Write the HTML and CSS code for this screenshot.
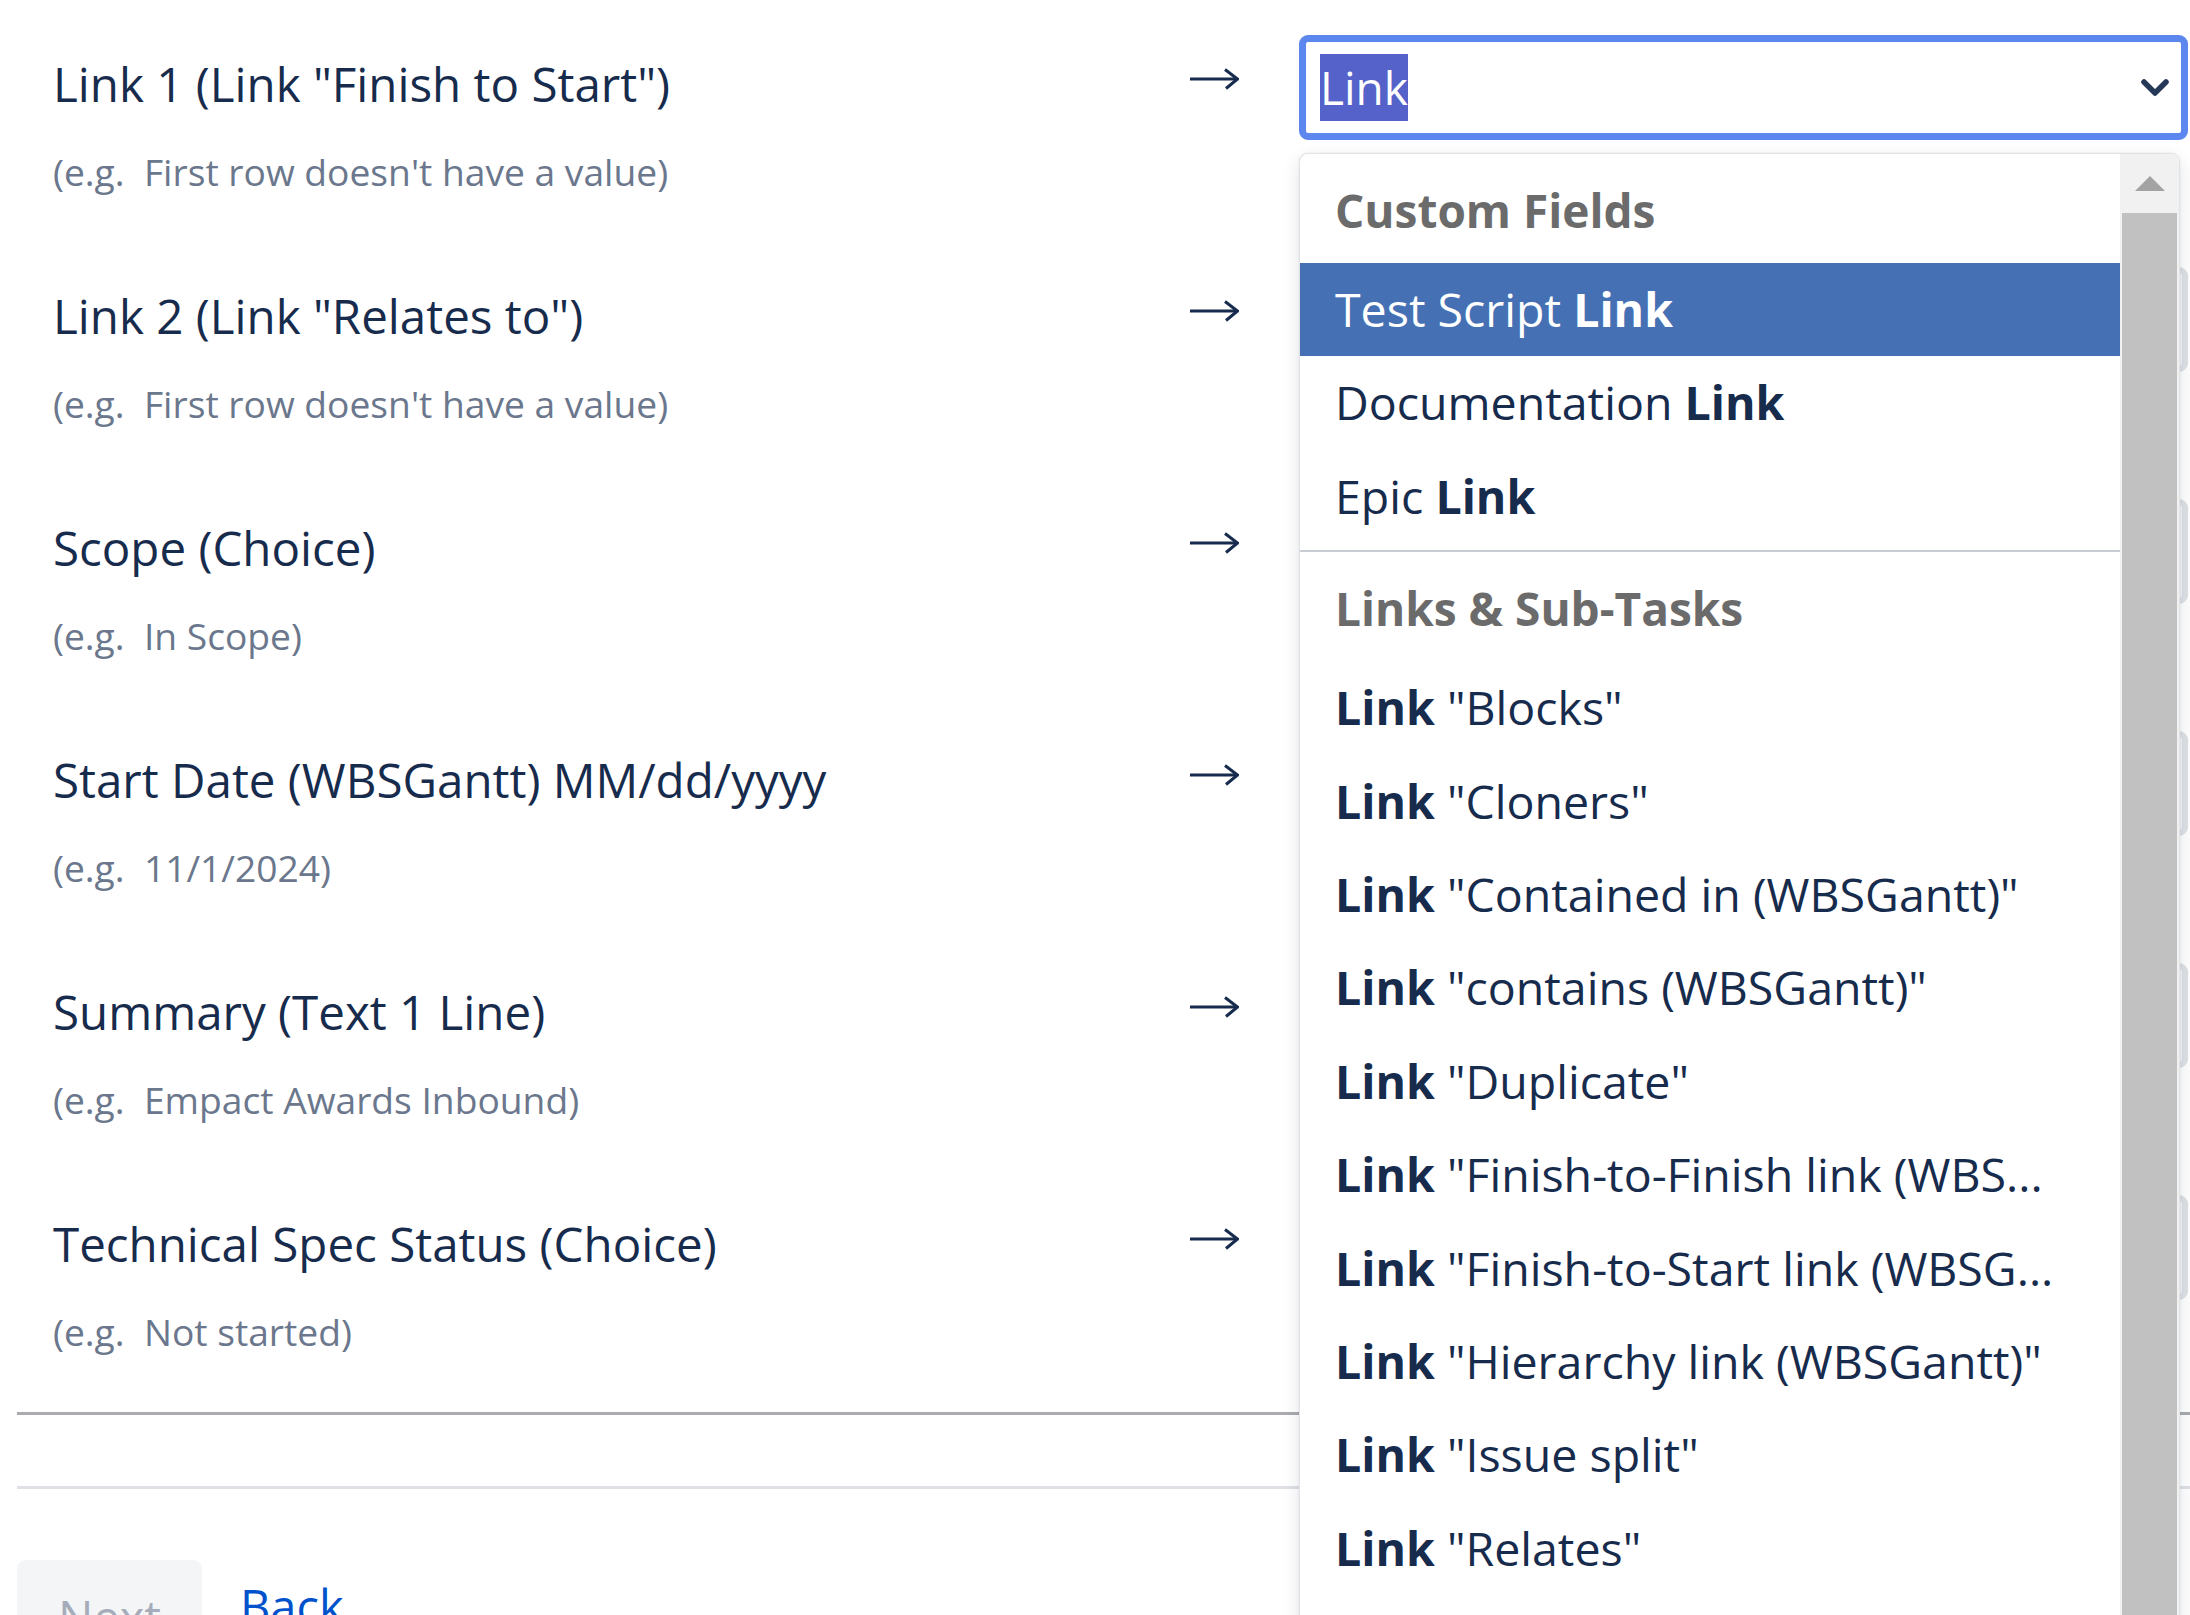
FILE: index.html
```html
<!DOCTYPE html>
<html lang="en">
<head>
<meta charset="utf-8">
<title>Field mapping</title>
<link rel="stylesheet" href="styles.css">
</head>
<body>
<div class="page">
  <div class="rows">
    <div class="row">
      <div class="field">
        <div class="label">Link 1 (Link "Finish to Start")</div>
        <div class="hint">(e.g.&nbsp; First row doesn't have a value)</div>
      </div>
      <div class="arrow"><svg width="50" height="24" viewBox="0 0 50 24"><path d="M1 12 H47" stroke="#172b4d" stroke-width="3" fill="none"/><path d="M36 2.5 L48.5 12 L37 21.5" stroke="#172b4d" stroke-width="3" fill="none"/></svg></div>
      <div class="select focused">
        <span class="value"><span class="sel-text">Link</span></span>
        <svg class="chev" width="28" height="20" viewBox="0 0 28 20"><path d="M3 4 L14 15 L25 4" stroke="#253858" stroke-width="5.5" fill="none" stroke-linecap="round" stroke-linejoin="round"/></svg>
      </div>
    </div>
    <div class="row">
      <div class="field">
        <div class="label">Link 2 (Link "Relates to")</div>
        <div class="hint">(e.g.&nbsp; First row doesn't have a value)</div>
      </div>
      <div class="arrow"><svg width="50" height="24" viewBox="0 0 50 24"><path d="M1 12 H47" stroke="#172b4d" stroke-width="3" fill="none"/><path d="M36 2.5 L48.5 12 L37 21.5" stroke="#172b4d" stroke-width="3" fill="none"/></svg></div>
      <div class="select"></div>
    </div>
    <div class="row">
      <div class="field">
        <div class="label">Scope (Choice)</div>
        <div class="hint">(e.g.&nbsp; In Scope)</div>
      </div>
      <div class="arrow"><svg width="50" height="24" viewBox="0 0 50 24"><path d="M1 12 H47" stroke="#172b4d" stroke-width="3" fill="none"/><path d="M36 2.5 L48.5 12 L37 21.5" stroke="#172b4d" stroke-width="3" fill="none"/></svg></div>
      <div class="select"></div>
    </div>
    <div class="row">
      <div class="field">
        <div class="label">Start Date (WBSGantt) MM/dd/yyyy</div>
        <div class="hint">(e.g.&nbsp; 11/1/2024)</div>
      </div>
      <div class="arrow"><svg width="50" height="24" viewBox="0 0 50 24"><path d="M1 12 H47" stroke="#172b4d" stroke-width="3" fill="none"/><path d="M36 2.5 L48.5 12 L37 21.5" stroke="#172b4d" stroke-width="3" fill="none"/></svg></div>
      <div class="select"></div>
    </div>
    <div class="row">
      <div class="field">
        <div class="label">Summary (Text 1 Line)</div>
        <div class="hint">(e.g.&nbsp; Empact Awards Inbound)</div>
      </div>
      <div class="arrow"><svg width="50" height="24" viewBox="0 0 50 24"><path d="M1 12 H47" stroke="#172b4d" stroke-width="3" fill="none"/><path d="M36 2.5 L48.5 12 L37 21.5" stroke="#172b4d" stroke-width="3" fill="none"/></svg></div>
      <div class="select"></div>
    </div>
    <div class="row">
      <div class="field">
        <div class="label">Technical Spec Status (Choice)</div>
        <div class="hint">(e.g.&nbsp; Not started)</div>
      </div>
      <div class="arrow"><svg width="50" height="24" viewBox="0 0 50 24"><path d="M1 12 H47" stroke="#172b4d" stroke-width="3" fill="none"/><path d="M36 2.5 L48.5 12 L37 21.5" stroke="#172b4d" stroke-width="3" fill="none"/></svg></div>
      <div class="select"></div>
    </div>
  </div>
  <div class="rule strong"></div>
  <div class="rule light"></div>
  <div class="actions">
    <button class="btn-next" disabled>Next</button>
    <a class="btn-back" href="#">Back</a>
  </div>

  <div class="menu">
    <div class="menu-list">
      <div class="group">
        <div class="group-heading">Custom Fields</div>
        <div class="option selected">Test Script <b>Link</b></div>
        <div class="option">Documentation <b>Link</b></div>
        <div class="option">Epic <b>Link</b></div>
      </div>
      <div class="group sep">
        <div class="group-heading">Links &amp; Sub-Tasks</div>
        <div class="option"><b>Link</b> "Blocks"</div>
        <div class="option"><b>Link</b> "Cloners"</div>
        <div class="option"><b>Link</b> "Contained in (WBSGantt)"</div>
        <div class="option"><b>Link</b> "contains (WBSGantt)"</div>
        <div class="option"><b>Link</b> "Duplicate"</div>
        <div class="option"><b>Link</b> "Finish-to-Finish link (WBS...</div>
        <div class="option"><b>Link</b> "Finish-to-Start link (WBSG...</div>
        <div class="option"><b>Link</b> "Hierarchy link (WBSGantt)"</div>
        <div class="option"><b>Link</b> "Issue split"</div>
        <div class="option"><b>Link</b> "Relates"</div>
      </div>
    </div>
    <div class="scrollbar">
      <div class="scroll-up"><span class="tri"></span></div>
      <div class="thumb"></div>
    </div>
  </div>
</div>
</body>
</html>
```
FILE: styles.css
```css
html, body {
  margin: 0;
  padding: 0;
  background: #ffffff;
  width: 2190px;
  height: 1615px;
  overflow: hidden;
}
body {
  font-family: "Open Sans", "Noto Sans", sans-serif;
  color: #172b4d;
}
.page {
  position: relative;
  padding-top: 35px;
}
.rows {
  display: flex;
  flex-direction: column;
  gap: 15px;
  padding: 0 2px 0 53px;
}
.row {
  display: grid;
  grid-template-columns: 1fr 110px 889px;
  height: 217px;
}
.field {
  padding-top: 17px;
}
.label {
  font-size: 47.5px;
  line-height: 64px;
  color: #172b4d;
  white-space: nowrap;
}
.hint {
  margin-top: 30px;
  font-size: 37.2px;
  line-height: 52px;
  color: #6b778c;
  white-space: nowrap;
}
.arrow {
  padding-top: 32px;
}
.arrow svg {
  display: block;
}
.select {
  box-sizing: border-box;
  height: 105px;
  border: 6px solid #dfe1e6;
  background: #f4f5f7;
  border-radius: 9px;
  display: flex;
  align-items: center;
  justify-content: space-between;
  padding: 0 12px 0 14px;
}
.select.focused {
  border: 7px solid #5b87ef;
  background: #ffffff;
}
.value {
  font-size: 46px;
  line-height: 67px;
}
.sel-text {
  display: inline-block;
  background: #5562c9;
  color: #ffffff;
  line-height: 67px;
}
.chev {
  display: block;
}
.rule {
  margin-left: 17px;
  height: 3px;
}
.rule.strong {
  background: #a9abaf;
}
.rule.light {
  margin-top: 71px;
  background: #dfe1e6;
}
.actions {
  display: flex;
  align-items: flex-start;
  gap: 38px;
  padding-left: 17px;
  margin-top: 71px;
}
.btn-next {
  box-sizing: border-box;
  width: 185px;
  height: 100px;
  border: none;
  border-radius: 9px;
  background: #f4f5f7;
  color: #a5adba;
  font-family: "Open Sans", "Noto Sans", sans-serif;
  font-size: 47px;
  line-height: 64px;
  padding: 14px 0 0 0;
  text-align: center;
  display: block;
}
.btn-back {
  color: #0052cc;
  text-decoration: none;
  font-size: 47px;
  line-height: 64px;
  padding-top: 14px;
}
.menu {
  position: absolute;
  top: 153px;
  left: 1299px;
  width: 881px;
  height: 1500px;
  box-sizing: border-box;
  background: #ffffff;
  border: 1px solid #e3e3e3;
  border-radius: 9px 9px 0 0;
  box-shadow: 0 6px 18px rgba(9, 30, 66, 0.12), 0 0 2px rgba(9, 30, 66, 0.1);
  display: flex;
  overflow: hidden;
}
.menu-list {
  flex: 1;
  min-width: 0;
}
.group {
  padding-bottom: 7px;
}
.group.sep {
  border-top: 2px solid #c8ccd3;
}
.group-heading {
  height: 109px;
  line-height: 113px;
  padding-left: 35px;
  box-sizing: border-box;
  font-size: 46px;
  font-weight: 700;
  color: #6b6b6b;
  white-space: nowrap;
}
.option {
  height: 93.4px;
  line-height: 93.4px;
  padding: 0 30px 0 35px;
  box-sizing: border-box;
  font-size: 46.5px;
  color: #172b4d;
  white-space: nowrap;
  overflow: hidden;
  text-overflow: ellipsis;
}
.option b {
  font-weight: 700;
}
.option.selected {
  background: #4571b4;
  color: #ffffff;
}
.scrollbar {
  width: 59px;
  background: #f1f1f1;
  display: flex;
  flex-direction: column;
}
.scroll-up {
  height: 59px;
  display: flex;
  align-items: center;
  justify-content: center;
}
.tri {
  width: 0;
  height: 0;
  border-left: 15px solid transparent;
  border-right: 15px solid transparent;
  border-bottom: 15px solid #a3a3a3;
}
.thumb {
  flex: 1;
  margin: 0 2px;
  background: #c1c1c1;
}
```
